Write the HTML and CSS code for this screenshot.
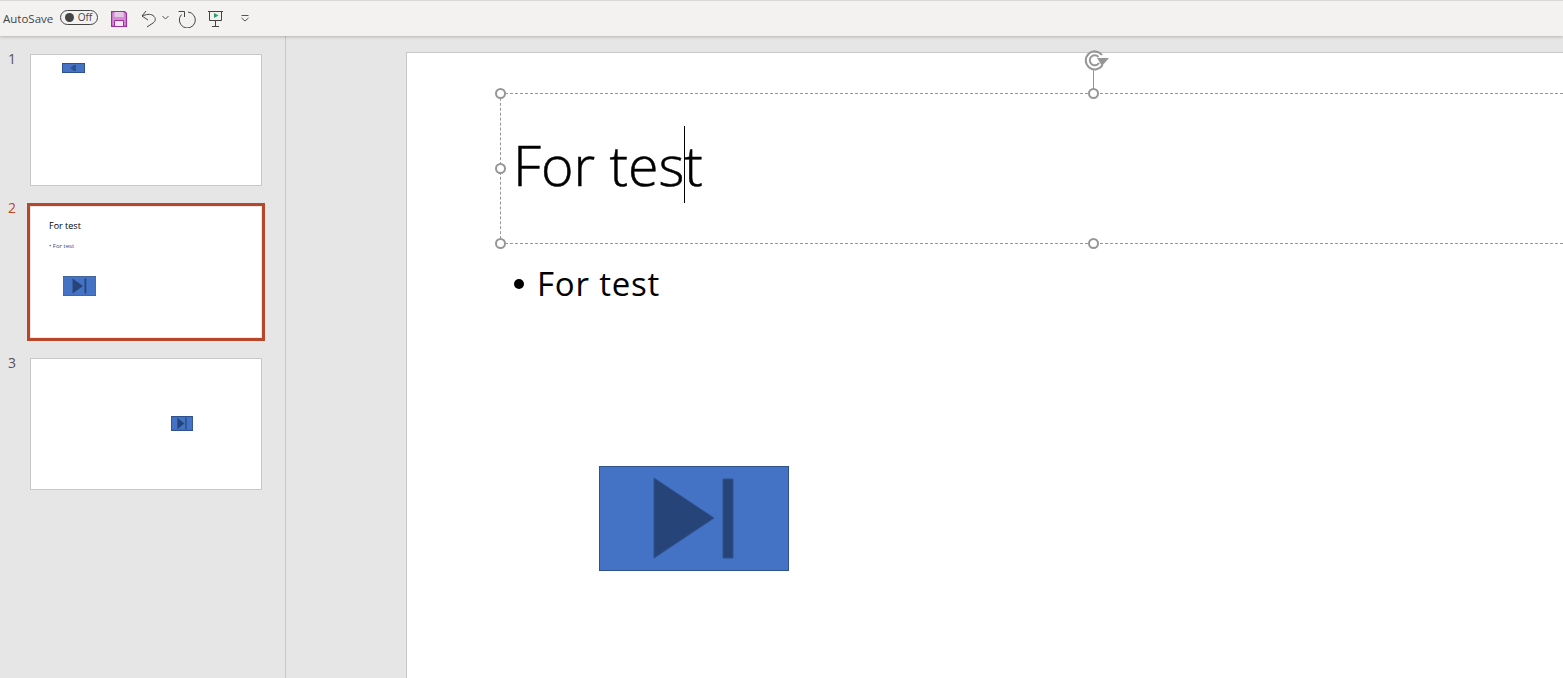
FILE: index.html
```html
<!DOCTYPE html>
<html lang="en">
<head>
  <meta charset="UTF-8" />
  <title>For test - PowerPoint</title>
  <link rel="stylesheet" href="styles.css">
</head>
<body>

  <header class="toolbar">
    <span class="autosave-label">AutoSave</span>
    <div class="toggle"><span class="toggle-dot"></span><span class="toggle-text">Off</span></div>

    <svg class="tool save" width="16" height="16" viewBox="0 0 16 16">
      <path d="M.5.5h13l2 2v13H.5z" fill="#cf8fd0" stroke="#a32ca3" stroke-width="1.300"/>
      <path d="M3.500 1h9v5h-9z" fill="#e6c8e6"/>
      <path d="M3.500 15.500v-6h9v6z" fill="#f3e9f3" stroke="#a32ca3"/>
    </svg>

    <svg class="tool undo" width="15" height="18" viewBox="0 0 15 18" fill="none" stroke="#444">
      <path d="M1 6C5 4.500 9 3.500 12 5.500 15.500 8 14.500 11.500 12 13L6 17"/>
      <path d="M5 1 1 6l6 4"/>
    </svg>
    <svg class="tool undo-more" width="7" height="5" viewBox="0 0 7 5" fill="none" stroke="#555"><path d="M.5 1 3.500 4l3-3"/></svg>

    <svg class="tool redo" width="18" height="18" viewBox="0 0 18 18" fill="none" stroke="#444">
      <path d="M10 2a8 8 0 1 1-6.500 2.500"/>
      <path d="M.5 1.500h6V7"/>
    </svg>

    <svg class="tool present" width="16" height="16" viewBox="0 0 16 16" fill="none" stroke="#444">
      <path d="M0 .5h15M1.500.5v9h12v-9M7.500 9.500v6M4 15.500h7"/>
      <path d="M6 2v5l4.500-2.500z" fill="#21a366" stroke="none"/>
    </svg>

    <svg class="tool more" width="8" height="7" viewBox="0 0 8 7" fill="none" stroke="#555"><path d="M.5.5h7M.5 3l3.500 3 3.500-3"/></svg>
  </header>

  <div class="workspace">
    <aside class="thumbs">
      <div class="thumb-row">
        <span class="thumb-num">1</span>
        <div class="thumb">
          <svg class="mini-btn mini-one" viewBox="0 0 23 10" preserveAspectRatio="none">
            <rect x=".5" y=".5" width="22" height="9" fill="#4472c4" stroke="#2f528f"/>
            <path d="M8 5l4-3v6zM12 2h2v6h-2z" fill="#2f528f"/>
          </svg>
        </div>
      </div>

      <div class="thumb-row active">
        <span class="thumb-num">2</span>
        <div class="thumb">
          <div class="mini-title">For test</div>
          <div class="mini-body">• For test</div>
          <svg class="mini-btn mini-two" viewBox="0 0 190 105" preserveAspectRatio="none">
            <rect x="2" y="2" width="186" height="101" fill="#4472c4" stroke="#2f528f" stroke-width="4"/>
            <path d="M55 13v79l60-39.500zM124 13h10v79h-10z" fill="#264478"/>
          </svg>
        </div>
      </div>

      <div class="thumb-row">
        <span class="thumb-num">3</span>
        <div class="thumb">
          <svg class="mini-btn mini-three" viewBox="0 0 190 105" preserveAspectRatio="none">
            <rect x="4" y="4" width="182" height="97" fill="#4472c4" stroke="#2f528f" stroke-width="8"/>
            <path d="M55 13v79l60-39.500zM124 13h10v79h-10z" fill="#264478"/>
          </svg>
        </div>
      </div>
    </aside>

    <main class="editor">
      <div class="slide">
        <svg class="rotate" width="28" height="24" viewBox="0 0 28 24" fill="none" stroke="#969696" stroke-width="2">
          <path d="M20.500 17a9 9 0 1 1-.5-10"/>
          <path d="M17 15a5 5 0 1 1-.5-6"/>
          <path d="M15 10h12l-7 8z" fill="#969696" stroke="none"/>
        </svg>
        <span class="rotate-line"></span>

        <div class="placeholder">
          <span class="handle h-tl"></span>
          <span class="handle h-tm"></span>
          <span class="handle h-ml"></span>
          <span class="handle h-bl"></span>
          <span class="handle h-bm"></span>
          <div class="title-text">For tes<span class="caret"></span>t</div>
        </div>

        <ul class="body-text">
          <li>For test</li>
        </ul>

        <svg class="action-btn" width="190" height="105" viewBox="0 0 190 105">
          <rect x=".5" y=".5" width="189" height="104" fill="#4472c4" stroke="#2f528f"/>
          <path d="M55 12v80l60-40zM124 13h10v79h-10z" fill="#264478" stroke="#2f528f"/>
        </svg>
      </div>
    </main>
  </div>

</body>
</html>
```

FILE: styles.css
```css
html, body {
  height: 100%;
}

body {
  margin: 0;
  overflow: hidden;
  display: flex;
  flex-direction: column;
  font-family: "Open Sans", "Noto Sans", sans-serif;
  background: #e6e6e6;
  color: #000;
}

/* Toolbar */
.toolbar {
  height: 36px;
  flex: none;
  display: flex;
  align-items: center;
  padding: 0 0 1px 3px;
  box-sizing: border-box;
  background: #f3f2f1;
  border-top: 1px solid #d8d8d8;
  box-shadow: 0 1px 3px rgba(0, 0, 0, 0.22);
  position: relative;
  font-size: 11.500px;
  color: #444;
}

.toggle {
  height: 13px;
  width: 27px;
  margin: 0 0 2px 7px;
  display: flex;
  align-items: center;
  justify-content: space-between;
  padding: 0 5px 0 4px;
  border: 1px solid #444;
  border-radius: 8px;
  font-size: 10px;
}

.toggle-dot {
  width: 9px;
  height: 9px;
  border-radius: 50%;
  background: #444;
}

.tool {
  flex: none;
}

.save { margin: 2px 0 0 13px; }
.undo { margin: 1px 0 0 14px; }
.undo-more { margin: 0 0 1px 6px; }
.redo { margin: 2px 0 0 9px; }
.present { margin: 1px 0 0 12px; }
.more { margin: 0 0 0 17px; }

/* Slide thumbnails */
.workspace {
  flex: 1;
  display: flex;
  min-height: 0;
}

.thumbs {
  width: 286px;
  flex: none;
  box-sizing: border-box;
  padding-top: 18px;
  border-right: 1px solid #c8c8c8;
  display: flex;
  flex-direction: column;
  gap: 17px;
}

.thumb-row {
  display: flex;
  height: 132px;
  padding-left: 8px;
}

.thumb-row.active {
  height: 138px;
}

.thumb-num {
  width: 22px;
  font-size: 14px;
  line-height: 10px;
  color: #555;
}

.thumb {
  position: relative;
  width: 230px;
  height: 130px;
  background: #fff;
  border: 1px solid #c8c8c8;
}

.active .thumb-num {
  width: 19px;
  color: #b7472a;
}

.active .thumb {
  width: 232px;
  height: 132px;
  border: 3px solid #b7472a;
  box-shadow: inset 0 0 0 1px #e8e8e8;
}

.mini-btn {
  position: absolute;
  display: block;
}

.mini-one {
  left: 31px;
  top: 8px;
  width: 23px;
  height: 10px;
}

.mini-two {
  left: 33px;
  top: 70px;
  width: 33px;
  height: 20px;
}

.mini-three {
  left: 140px;
  top: 57px;
  width: 22px;
  height: 15px;
}

.mini-title {
  position: absolute;
  left: 19px;
  top: 13px;
  font-size: 9px;
}

.mini-body {
  position: absolute;
  left: 19px;
  top: 36px;
  font-size: 6px;
  color: #2f4a80;
}

/* Editing area */
.editor {
  flex: 1;
  min-width: 0;
  display: flex;
  padding: 16px 0 0 120px;
  overflow: hidden;
}

.slide {
  position: relative;
  flex: 1;
  background: #fff;
  border: 1px solid #c8c8c8;
  border-width: 1px 0 0 1px;
}

.placeholder {
  position: absolute;
  left: 93px;
  top: 40px;
  right: -20px;
  height: 149px;
  box-sizing: content-box;
  border: 1px dashed #969696;
  display: flex;
  align-items: center;
}

.title-text {
  margin: 0 0 8px 12px;
  font-size: 55.500px;
  font-weight: 300;
  -webkit-text-stroke: 0.5px #000;
  line-height: 77px;
  white-space: nowrap;
}

.caret {
  display: inline-block;
  width: 1px;
  height: 77px;
  margin-right: -1px;
  vertical-align: -17px;
  background: #000;
}

.handle {
  position: absolute;
  width: 7px;
  height: 7px;
  border: 2px solid #969696;
  border-radius: 50%;
  background: #fff;
}

.h-tl { left: -6px; top: -6px; }
.h-tm { left: 587px; top: -6px; }
.h-ml { left: -6px; top: 69px; }
.h-bl { left: -6px; top: 144px; }
.h-bm { left: 587px; top: 144px; }

.rotate {
  position: absolute;
  left: 675px;
  top: -5px;
}

.rotate-line {
  position: absolute;
  left: 686px;
  top: 17px;
  width: 1px;
  height: 19px;
  background: #969696;
}

.body-text {
  position: absolute;
  left: 107px;
  top: 208px;
  margin: 0;
  padding: 0;
  list-style: none;
  font-size: 33px;
  letter-spacing: 0.8px;
  line-height: 45px;
}

.body-text li {
  display: flex;
  align-items: center;
  gap: 13px;
}

.body-text li::before {
  content: "";
  width: 10px;
  height: 10px;
  border-radius: 50%;
  background: #000;
}

.action-btn {
  position: absolute;
  left: 192px;
  top: 413px;
  display: block;
}
```
